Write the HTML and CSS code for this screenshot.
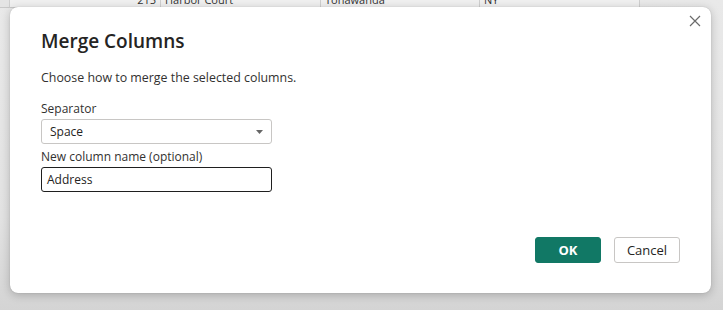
FILE: index.html
```html
<!DOCTYPE html>
<html>
<head>
<meta charset="utf-8">
<link rel="stylesheet" href="styles.css">
</head>
<body>
<div class="backdrop">
  <div class="grid-row">
    <div class="cell c0"></div>
    <div class="cell c1 num">215</div>
    <div class="cell c2">Harbor Court</div>
    <div class="cell c3">Tonawanda</div>
    <div class="cell c4">NY</div>
  </div>
</div>
<div class="dialog">
  <button class="close" aria-label="Close">
    <svg width="12" height="12" viewBox="0 0 12 12"><path d="M1 1L11 11M11 1L1 11" stroke="#6b6b6b" stroke-width="1.2" fill="none"/></svg>
  </button>
  <h1 class="title">Merge Columns</h1>
  <p class="desc">Choose how to merge the selected columns.</p>
  <label class="label">Separator</label>
  <div class="select">
    <span>Space</span>
    <svg class="caret" width="7" height="4" viewBox="0 0 7 4"><path d="M0 0H7L3.5 4Z" fill="#666"/></svg>
  </div>
  <label class="label label2">New column name (optional)</label>
  <div class="input">Address</div>
  <div class="actions">
    <button class="btn ok">OK</button>
    <button class="btn cancel">Cancel</button>
  </div>
</div>
</body>
</html>
```
FILE: styles.css
```css
html, body {
  margin: 0;
  padding: 0;
}
body {
  width: 723px;
  height: 310px;
  overflow: hidden;
  background: linear-gradient(#e9e9e9 0%, #e2e2e2 70%, #d4d4d4 100%);
  font-family: "Segoe UI", "Open Sans", "Noto Sans", sans-serif;
  position: relative;
}
.backdrop {
  height: 310px;
}
.grid-row {
  display: flex;
  margin-top: -7px;
  height: 15px;
  font-size: 11px;
  color: #333;
  line-height: 14px;
}
.cell {
  box-sizing: border-box;
  border-right: 1px solid #cfcfcf;
  border-bottom: 1px solid #c8c8c8;
  background: #f0f0f0;
  padding: 0 4px;
  white-space: nowrap;
  overflow: hidden;
}
.c0 { width: 10px; background: #e4e4e4; border-right: 1px solid #cfcfcf; }
.c1 { width: 151px; text-align: right; }
.c2 { width: 160px; }
.c3 { width: 159px; }
.c4 { width: 160px; }
.dialog {
  position: absolute;
  left: 10px;
  top: 7px;
  width: 701px;
  height: 286px;
  box-sizing: border-box;
  background: #fff;
  border-radius: 8px;
  box-shadow: 0 2px 10px rgba(0,0,0,0.22), 0 0 1px rgba(0,0,0,0.25);
  padding: 20px 31px 0 31px;
}
.close {
  position: absolute;
  right: 9px;
  top: 7px;
  width: 14px;
  height: 14px;
  padding: 0;
  border: 0;
  background: none;
  display: flex;
  align-items: center;
  justify-content: center;
}
.title {
  margin: 0;
  font-size: 19px;
  font-weight: 600;
  color: #252423;
  line-height: 28px;
}
.desc {
  margin: 14px 0 0 0;
  font-size: 12.4px;
  color: #323130;
  line-height: 18px;
}
.label {
  display: block;
  margin-top: 14px;
  font-size: 12px;
  color: #323130;
  line-height: 16px;
}
.label2 { margin-top: 5px; }
.select {
  margin-top: 2px;
  width: 231px;
  height: 25px;
  box-sizing: border-box;
  border: 1px solid #c8c6c4;
  border-radius: 3px;
  display: flex;
  align-items: center;
  justify-content: space-between;
  padding: 0 8px 0 8px;
  font-size: 12px;
  color: #252423;
}
.caret { margin-top: 1px; }
.input {
  margin-top: 2px;
  width: 231px;
  height: 25px;
  box-sizing: border-box;
  border: 1px solid #1f1f1f;
  border-radius: 3px;
  display: flex;
  align-items: center;
  padding: 0 5px;
  font-size: 12px;
  color: #252423;
}
.actions {
  display: flex;
  justify-content: flex-end;
  gap: 13px;
  margin-top: 45px;
  padding-right: 0;
}
.btn {
  width: 66px;
  height: 26px;
  box-sizing: border-box;
  border-radius: 3px;
  font-family: inherit;
  font-size: 13px;
  padding: 0;
}
.ok {
  background: #117865;
  border: 1px solid #117865;
  color: #fff;
  font-weight: 700;
}
.cancel {
  background: #fff;
  border: 1px solid #c8c6c4;
  color: #252423;
}
```
